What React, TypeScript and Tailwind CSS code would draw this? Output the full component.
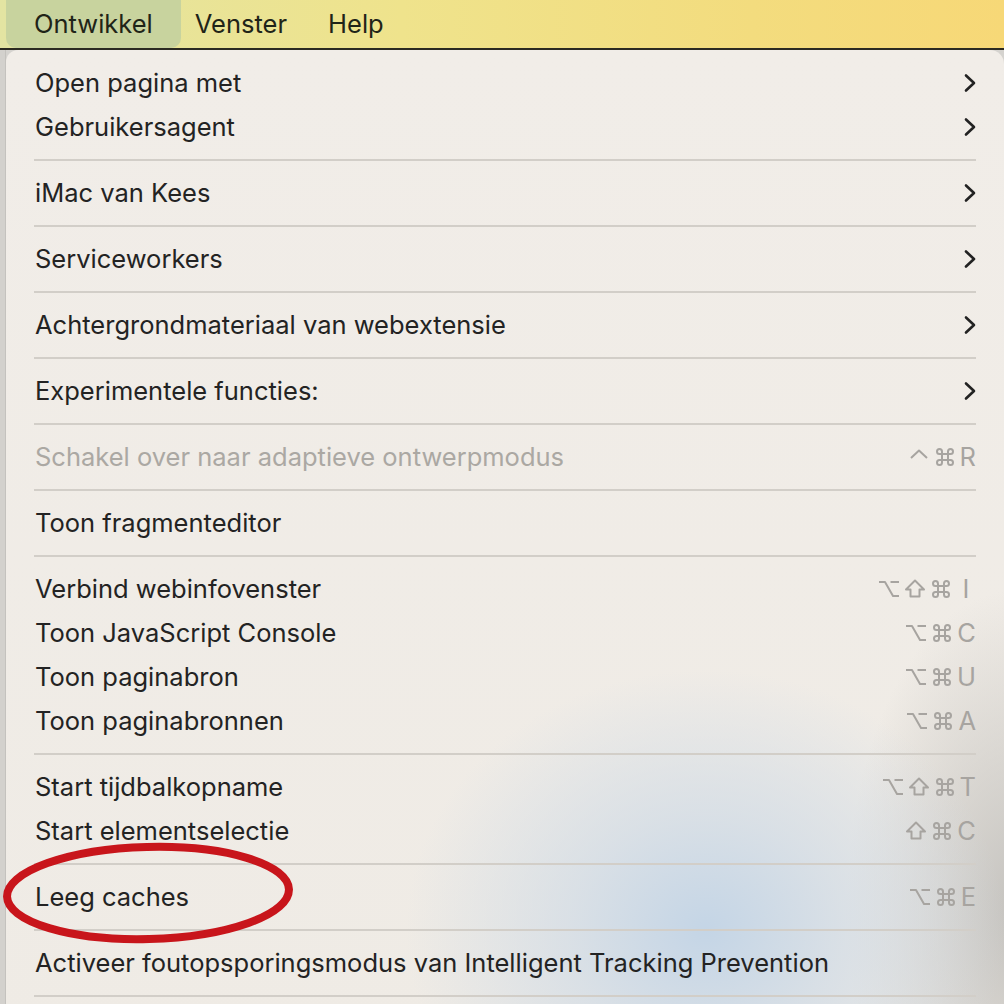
import React from 'react';

type Item =
  | { kind: 'sep' }
  | { kind: 'item'; label: string; sub?: boolean; keys?: string[]; disabled?: boolean };

const items: Item[] = [
  { kind: 'item', label: 'Open pagina met', sub: true },
  { kind: 'item', label: 'Gebruikersagent', sub: true },
  { kind: 'sep' },
  { kind: 'item', label: 'iMac van Kees', sub: true },
  { kind: 'sep' },
  { kind: 'item', label: 'Serviceworkers', sub: true },
  { kind: 'sep' },
  { kind: 'item', label: 'Achtergrondmateriaal van webextensie', sub: true },
  { kind: 'sep' },
  { kind: 'item', label: 'Experimentele functies:', sub: true },
  { kind: 'sep' },
  { kind: 'item', label: 'Schakel over naar adaptieve ontwerpmodus', keys: ['ctrl', 'cmd', 'R'], disabled: true },
  { kind: 'sep' },
  { kind: 'item', label: 'Toon fragmenteditor' },
  { kind: 'sep' },
  { kind: 'item', label: 'Verbind webinfovenster', keys: ['opt', 'shift', 'cmd', 'I'] },
  { kind: 'item', label: 'Toon JavaScript Console', keys: ['opt', 'cmd', 'C'] },
  { kind: 'item', label: 'Toon paginabron', keys: ['opt', 'cmd', 'U'] },
  { kind: 'item', label: 'Toon paginabronnen', keys: ['opt', 'cmd', 'A'] },
  { kind: 'sep' },
  { kind: 'item', label: 'Start tijdbalkopname', keys: ['opt', 'shift', 'cmd', 'T'] },
  { kind: 'item', label: 'Start elementselectie', keys: ['shift', 'cmd', 'C'] },
  { kind: 'sep' },
  { kind: 'item', label: 'Leeg caches', keys: ['opt', 'cmd', 'E'] },
  { kind: 'sep' },
  { kind: 'item', label: 'Activeer foutopsporingsmodus van Intelligent Tracking Prevention' },
  { kind: 'sep' },
];

function Chevron() {
  return (
    <svg width="12" height="20" viewBox="0 0 12 20" className="text-[#222]">
      <path d="M2 2.5 L10 10 L2 17.5" fill="none" stroke="currentColor" strokeWidth="2.6" strokeLinecap="round" strokeLinejoin="round" />
    </svg>
  );
}

const paths: Record<string, string> = {
  opt: 'M1 4 H7 L15 18 H21 M12.5 4 H21',
  shift: 'M11 2.5 L20 11.5 H15.5 V18.5 H6.5 V11.5 H2 Z',
  cmd: 'M8 8 V5.5 A2.5 2.5 0 1 0 5.5 8 H16.5 A2.5 2.5 0 1 0 14 5.5 V16.5 A2.5 2.5 0 1 0 16.5 14 H5.5 A2.5 2.5 0 1 0 8 16.5 V8',
  ctrl: 'M3 12 L11 4.5 L19 12',
};

function Key({ k }: { k: string }) {
  if (paths[k]) {
    return (
      <svg width="22" height="22" viewBox="0 0 22 22">
        <path d={paths[k]} fill="none" stroke="currentColor" strokeWidth="2" strokeLinejoin="round" />
      </svg>
    );
  }
  return <span className={k === 'I' ? 'w-[20px] text-center' : ''}>{k}</span>;
}

function Row({ item }: { item: Extract<Item, { kind: 'item' }> }) {
  return (
    <div className="h-[44px] flex items-center justify-between pl-[29px] pr-[28px]">
      <span className={item.disabled ? 'text-[#aba8a3]' : 'text-[#232323]'}>{item.label}</span>
      {item.sub && <Chevron />}
      {item.keys && (
        <span className="flex items-center gap-[4px] text-[#a7a4a0]">
          {item.keys.map((k, i) => (
            <Key key={i} k={k} />
          ))}
        </span>
      )}
    </div>
  );
}

export default function App() {
  return (
    <div className="relative w-[1004px] h-[1004px] overflow-hidden bg-[#d5d3cf] font-['Inter',sans-serif] text-[25.5px] leading-none">
      <header className="h-[50px] flex items-stretch bg-[linear-gradient(90deg,#e3e4a2_0%,#efe38c_40%,#f3dc7e_75%,#f7d877_100%)] border-b-2 border-[#2b2a22]">
        <div className="ml-[6px] px-[28px] flex items-center rounded-b-[10px] bg-[#c8d39e] text-[#1f2418]">Ontwikkel</div>
        <div className="ml-[14px] flex items-center text-[#1f2418]">Venster</div>
        <div className="ml-[41px] flex items-center text-[#1f2418]">Help</div>
      </header>
      <div className="flex h-full">
        <div className="w-[6px] shrink-0 bg-[#d3d1cd] border-r border-[#c4c2be]" />
        <div className="flex-1 rounded-tl-[12px] rounded-tr-[14px] pt-[11px] bg-[radial-gradient(ellipse_300px_260px_at_700px_880px,#c4d5e6_0%,rgba(210,220,230,0.75)_45%,rgba(240,236,230,0)_100%),radial-gradient(ellipse_170px_320px_at_1010px_860px,#c5c3bf_0%,rgba(240,236,230,0)_100%),linear-gradient(180deg,#f1ede8,#efebe5)]">
          {items.map((it, i) =>
            it.kind === 'sep' ? (
              <div key={i} className="h-[22px] flex items-center pl-[28px] pr-[28px]">
                <div className="h-[2px] w-full bg-[#d2cec8]" />
              </div>
            ) : (
              <Row key={i} item={it} />
            ),
          )}
        </div>
      </div>
      <svg className="absolute left-0 top-[838px]" width="300" height="110" viewBox="0 0 300 110">
        <ellipse cx="148" cy="55" rx="141" ry="46" fill="none" stroke="#c8151b" strokeWidth="8" transform="rotate(-1.5 148 55)" />
      </svg>
    </div>
  );
}
